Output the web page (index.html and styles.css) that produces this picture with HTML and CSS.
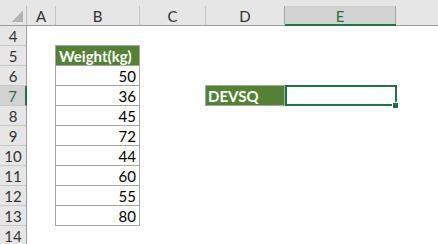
FILE: index.html
```html
<!DOCTYPE html>
<html>
<head>
<meta charset="utf-8">
<link rel="stylesheet" href="styles.css">
</head>
<body>
<div class="sheet">
  <div class="ch corner"><span class="lab"></span></div>
  <div class="ch"><span class="lab">A</span></div>
  <div class="ch"><span class="lab">B</span></div>
  <div class="ch"><span class="lab">C</span></div>
  <div class="ch"><span class="lab">D</span></div>
  <div class="ch sel-col"><span class="lab">E</span></div>
  <div class="ch last"><span class="lab"></span></div>

  <div class="rh">4</div><div class="c"></div><div class="c"></div><div class="c"></div><div class="c"></div><div class="c"></div><div class="c"></div>
  <div class="rh">5</div><div class="c"></div><div class="c tb th">Weight(kg)</div><div class="c"></div><div class="c"></div><div class="c"></div><div class="c"></div>
  <div class="rh">6</div><div class="c"></div><div class="c tb num">50</div><div class="c"></div><div class="c"></div><div class="c"></div><div class="c"></div>
  <div class="rh sel-row">7</div><div class="c"></div><div class="c tb num">36</div><div class="c"></div><div class="c lbl">DEVSQ</div><div class="c sel"></div><div class="c"></div>
  <div class="rh">8</div><div class="c"></div><div class="c tb num">45</div><div class="c"></div><div class="c"></div><div class="c"></div><div class="c"></div>
  <div class="rh">9</div><div class="c"></div><div class="c tb num">72</div><div class="c"></div><div class="c"></div><div class="c"></div><div class="c"></div>
  <div class="rh">10</div><div class="c"></div><div class="c tb num">44</div><div class="c"></div><div class="c"></div><div class="c"></div><div class="c"></div>
  <div class="rh">11</div><div class="c"></div><div class="c tb num">60</div><div class="c"></div><div class="c"></div><div class="c"></div><div class="c"></div>
  <div class="rh">12</div><div class="c"></div><div class="c tb num">55</div><div class="c"></div><div class="c"></div><div class="c"></div><div class="c"></div>
  <div class="rh">13</div><div class="c"></div><div class="c tb num">80</div><div class="c"></div><div class="c"></div><div class="c"></div><div class="c"></div>
  <div class="rh">14</div><div class="c"></div><div class="c"></div><div class="c"></div><div class="c"></div><div class="c"></div><div class="c"></div>
</div>
</body>
</html>
```

FILE: styles.css
```css
* { box-sizing: border-box; }
html, body { margin: 0; padding: 0; background: #fff; }
body { width: 438px; height: 244px; overflow: hidden; }

.sheet {
  display: grid;
  grid-template-columns: 27px 29px 84px 66px 79px 111px 42px;
  grid-template-rows: 26px repeat(11, 20px);
  font-family: Lato, "Liberation Sans", sans-serif;
  font-size: 15px;
  color: #000;
}

.ch {
  background: #e6e6e6;
  padding-top: 6px;
  border-bottom: 1px solid #9e9e9e;
}
.ch .lab {
  display: flex;
  height: 100%;
  align-items: center;
  justify-content: center;
  border-right: 1px solid #c4c4c4;
  color: #333;
  padding-top: 1px;
}
.ch.corner .lab {
  border-right-color: #bdbdbd;
  background: linear-gradient(to bottom right, transparent 50%, #b4b4b4 50%) no-repeat right 3px bottom 3px / 11px 11px;
}
.ch.last .lab { border-right: 0; }
.ch.sel-col { border-bottom: 2px solid #217346; }
.ch.sel-col .lab {
  background: #d2d2d2;
  color: #217346;
  border-left: 1px solid #a8a8a8;
  border-right: 1px solid #a8a8a8;
  margin-left: -1px;
}

.rh {
  background: #e6e6e6;
  border-right: 1px solid #9e9e9e;
  border-bottom: 1px solid #c8c8c8;
  display: flex;
  align-items: center;
  justify-content: center;
  color: #333;
  padding-top: 1px;
}
.rh.sel-row {
  background: #d2d2d2;
  color: #217346;
  border-right: 2px solid #217346;
}

.c { background: #fff; }

.tb {
  margin: -1px 0 0 -1px;
  border: 1px solid #a6a6a6;
  display: flex;
  align-items: flex-end;
  padding: 0 3px 0 3px;
}
.num { justify-content: flex-end; }
.th {
  background: #548235;
  color: #fff;
  font-weight: bold;
}

.lbl {
  margin: -1px 0 0 -1px;
  border: 1px solid #a6a6a6;
  background: #548235;
  color: #fff;
  font-weight: bold;
  display: flex;
  align-items: flex-end;
  padding: 0 2px 0 2px;
}

.sel {
  position: relative;
  margin: -1px -1px 0 0;
  border: 2px solid #217346;
}
.sel::after {
  content: "";
  position: absolute;
  right: -3px;
  bottom: -4px;
  width: 5px;
  height: 5px;
  background: #217346;
  box-shadow: 0 0 0 1px #fff;
}
```
